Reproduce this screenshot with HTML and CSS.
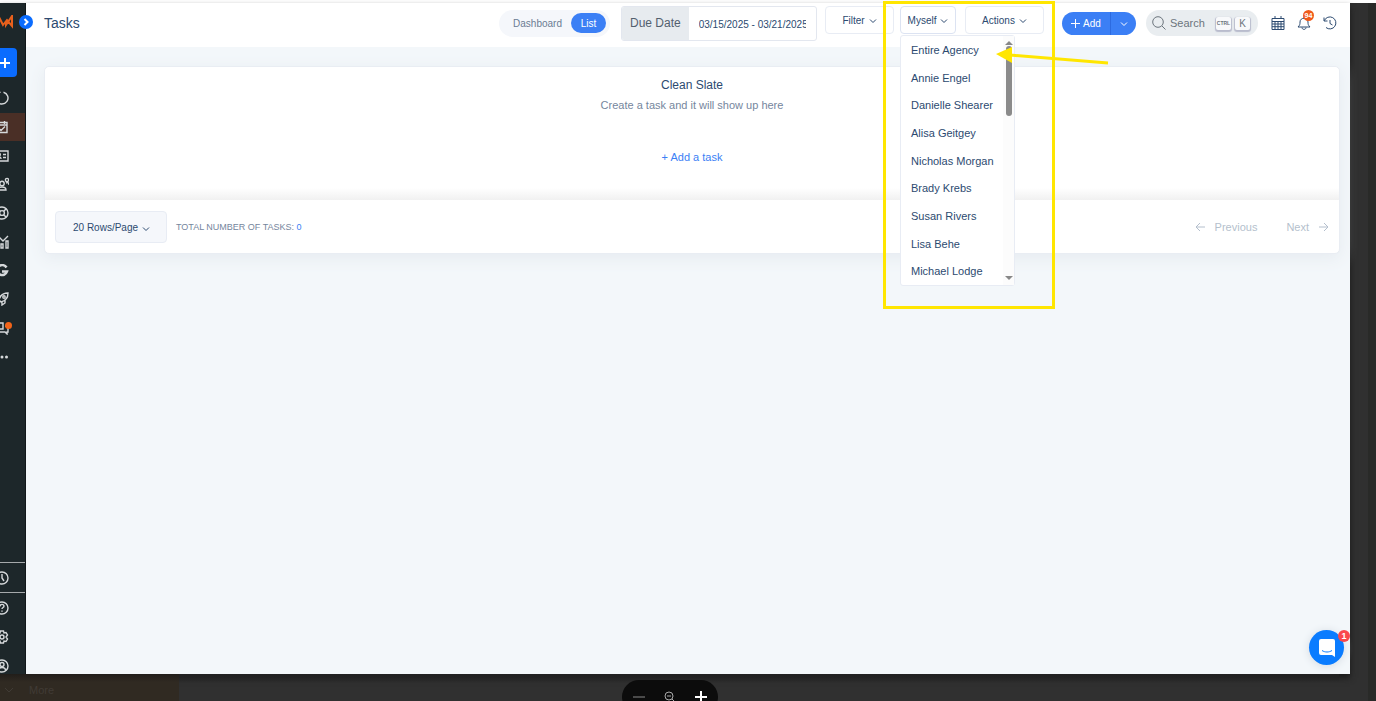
FILE: index.html
```html
<!DOCTYPE html>
<html lang="en">
<head>
    <meta charset="UTF-8">
    <meta name="viewport" content="width=device-width, initial-scale=1.0">
    <title>Tasks</title>
    <link rel="stylesheet" href="styles.css">
</head>
<body>
    <div class="app">
        <aside class="sidebar">
            <a class="logo" href="#" aria-label="Home">
                <svg width="22" height="14" viewBox="0 0 22 14"><path d="M0 4l4 6 4-6 3 6 4-5 5 6V1l-6 9V6"/></svg>
            </a>
            <button class="new-btn" aria-label="New"><svg width="12" height="12" viewBox="0 0 12 12"><path d="M6 1v10M1 6h10"/></svg></button>
            <nav class="side-nav">
                <a href="#" aria-label="Overview"><svg viewBox="0 0 14 14"><path d="M8.500 1.200A6 6 0 1 1 5.500 1.200"/></svg></a>
                <a href="#" class="active" aria-label="Tasks"><svg viewBox="0 0 14 14"><path d="M1 2.500h11v10H1zM1 5h11M4 1v3M9.500 1v3M4 8.500l2 2 4-4"/></svg></a>
                <a href="#" aria-label="Contacts"><svg viewBox="0 0 14 14"><path d="M0 2h13v10H0zM8 5.500h3M8 8.500h3M2 10c0-3 4-3 4 0"/><circle cx="4" cy="5.500" r="1.300"/></svg></a>
                <a href="#" aria-label="Teams"><svg viewBox="0 0 14 14"><circle cx="7" cy="6.500" r="2.200"/><circle cx="2" cy="3" r="1.600"/><circle cx="12" cy="3" r="1.600"/><path d="M3 13c0-4 8-4 8 0zM11 6c2-1 3 0 3 2M3 6C1 5 0 6 0 8"/></svg></a>
                <a href="#" aria-label="Support"><svg viewBox="0 0 14 14"><circle cx="7" cy="7" r="6"/><circle cx="7" cy="7" r="2.400"/><path d="M2.800 2.800l2.500 2.500M11.200 2.800L8.700 5.300M2.800 11.200l2.500-2.500M11.200 11.200L8.700 8.700"/></svg></a>
                <a href="#" aria-label="Reports"><svg viewBox="0 0 14 14"><path d="M1 13V8h2v5zM6 13V9h2v4zM11 13V6h2v7zM0 5l4-3 4 4 5-5"/></svg></a>
                <a href="#" aria-label="Google"><svg class="bold" viewBox="0 0 14 14"><path d="M11.500 3.500A5 5 0 1 0 12 7.500H7"/></svg></a>
                <a href="#" aria-label="Launch"><svg viewBox="0 0 14 14"><path d="M4 8c1-4 4-7 9-7 0 5-3 8-7 9zM4 7H1l2-3h3M7 10v3l3-2V8M3 10l-2 3 3-1"/><circle cx="9" cy="5" r="1.200"/></svg></a>
                <a href="#" class="has-dot" aria-label="Messages"><svg viewBox="0 0 14 14"><path d="M0 2h8v6H4l-2 2V8H0zM10 5h3v6h-1v2l-2-2H5"/></svg></a>
                <a href="#" aria-label="More"><svg class="dots" viewBox="0 0 14 14"><circle cx="2" cy="7" r="1.500"/><circle cx="7" cy="7" r="1.500"/><circle cx="11.500" cy="7" r="1.500"/></svg></a>
            </nav>
            <nav class="side-bottom">
                <a href="#" class="clock" aria-label="Time"><svg viewBox="0 0 14 14"><circle cx="7" cy="7" r="6"/><path d="M7 3v4l2 3"/></svg></a>
                <a href="#" aria-label="Help"><svg viewBox="0 0 14 14"><circle cx="7" cy="7" r="6"/><path d="M5 5.500c0-3 4-2.500 4-.300C9 6.500 7 6.500 7 8M7 9.500v1.200"/></svg></a>
                <a href="#" aria-label="Settings"><svg viewBox="0 0 14 14"><path d="M5.500 1h3l.5 2 2-.500 1.500 2.500L11 7l1.500 2-1.500 2.500-2-.500-.5 2h-3L5 11l-2 .500L1.500 9 3 7 1.500 5 3 2.500 5 3z"/><circle cx="7" cy="7" r="2"/></svg></a>
                <a href="#" aria-label="Account"><svg viewBox="0 0 14 14"><circle cx="7" cy="7" r="6"/><circle cx="7" cy="5.500" r="2"/><path d="M3.500 11.500c0-4 7-4 7 0"/></svg></a>
            </nav>
        </aside>

        <div class="main">
            <button class="expand-btn" aria-label="Expand menu"><svg width="8" height="8" viewBox="0 0 8 8"><path d="M2.500 1l3 3-3 3"/></svg></button>
            <header class="topbar">
                <h1>Tasks</h1>
                <div class="view-toggle">
                    <button>Dashboard</button>
                    <button class="on">List</button>
                </div>
                <div class="date-group">
                    <label for="dueDate">Due Date</label>
                    <input type="text" id="dueDate" value="03/15/2025 - 03/21/2025">
                </div>
                <div class="filters">
                    <button class="drop filter">Filter <svg class="chev" viewBox="0 0 8 6"><path d="M1 1.500l3 3 3-3"/></svg></button>
                    <div class="assignee">
                        <button class="drop myself" aria-expanded="true">Myself <svg class="chev" viewBox="0 0 8 6"><path d="M1 1.500l3 3 3-3"/></svg></button>
                        <div class="menu">
                            <ul>
                                <li><button>Entire Agency</button></li>
                                <li><button>Annie Engel</button></li>
                                <li><button>Danielle Shearer</button></li>
                                <li><button>Alisa Geitgey</button></li>
                                <li><button>Nicholas Morgan</button></li>
                                <li><button>Brady Krebs</button></li>
                                <li><button>Susan Rivers</button></li>
                                <li><button>Lisa Behe</button></li>
                                <li><button>Michael Lodge</button></li>
                            </ul>
                            <div class="scroll">
                                <svg width="8" height="5" viewBox="0 0 8 5"><path d="M0 5l4-4 4 4z"/></svg>
                                <div class="thumb"></div>
                                <svg width="8" height="5" viewBox="0 0 8 5"><path d="M0 0l4 4 4-4z"/></svg>
                            </div>
                        </div>
                        <div class="highlight"></div>
                        <svg class="arrow" width="114" height="20" viewBox="0 0 114 20"><path class="line" d="M14 7l98 8"/><path d="M0 6L16-1v16z"/></svg>
                    </div>
                    <button class="drop actions">Actions <svg class="chev" viewBox="0 0 8 6"><path d="M1 1.500l3 3 3-3"/></svg></button>
                </div>
                <div class="add-group">
                    <button class="add"><svg width="9" height="9" viewBox="0 0 9 9"><path d="M4.500 0v9M0 4.500h9"/></svg>Add</button>
                    <button class="add-more" aria-label="More add options"><svg class="chev" viewBox="0 0 8 6"><path d="M1 1.500l3 3 3-3"/></svg></button>
                </div>
                <button class="search">
                    <svg width="14" height="14" viewBox="0 0 14 14"><circle cx="6" cy="6" r="5.300"/><path d="M10 10l3.500 3.500"/></svg>
                    Search
                    <span class="keys"><kbd class="ctrl">CTRL</kbd><kbd>K</kbd></span>
                </button>
                <div class="tools">
                    <button aria-label="Calendar"><svg viewBox="0 0 14 14"><path d="M1 2.500h12v11H1zM1 5.500h12M1 8h12M1 10.700h12M4 5.500v8M7 5.500v8M10 5.500v8M4 0v3M10 0v3"/></svg></button>
                    <button aria-label="Notifications"><svg viewBox="0 0 14 14"><path d="M1 11c2-2 2-3 2-5 0-5 8-5 8 0 0 2 0 3 2 5zM5 11.500c0 2.500 4 2.500 4 0M7 2V.500"/></svg><span class="count">94</span></button>
                    <button aria-label="History"><svg viewBox="0 0 14 14"><path d="M1 1.500V5h3.500M1.300 4.700A6 6 0 1 1 3 11.500M7 4v3.500l2.500 1.500"/></svg></button>
                </div>
            </header>

            <main class="content">
                <section class="card">
                    <div class="empty">
                        <h2>Clean Slate</h2>
                        <p>Create a task and it will show up here</p>
                        <a href="#">+ Add a task</a>
                    </div>
                    <footer class="card-footer">
                        <div class="rows">
                            <select aria-label="Rows per page"><option>20 Rows/Page</option><option>50 Rows/Page</option></select>
                            <svg class="chev" viewBox="0 0 8 6"><path d="M1 1.500l3 3 3-3"/></svg>
                        </div>
                        <p class="total">TOTAL NUMBER OF TASKS: <span>0</span></p>
                        <div class="pager">
                            <button disabled><svg width="10" height="10" viewBox="0 0 10 10"><path d="M10 5H1M5 1L1 5l4 4"/></svg>Previous</button>
                            <button disabled>Next<svg width="10" height="10" viewBox="0 0 10 10"><path d="M0 5h9M5 1l4 4-4 4"/></svg></button>
                        </div>
                    </footer>
                </section>
            </main>

            <button class="chat" aria-label="Open chat">
                <svg width="16" height="18" viewBox="0 0 16 18"><path d="M2 0h12a2 2 0 0 1 2 2v16l-3-2H2a2 2 0 0 1-2-2V2a2 2 0 0 1 2-2z" fill="#fff"/><path d="M3 11.500c3 2 7 2 10 0" fill="none" stroke="#0a7cff"/></svg>
                <span class="chat-count">1</span>
            </button>
        </div>
    </div>

    <div class="viewer-bar">
        <div class="behind"><svg width="10" height="6" viewBox="0 0 10 6"><path d="M1 1l4 4 4-4"/></svg>More</div>
        <div class="zoom-pill">
            <button aria-label="Zoom out"><svg width="12" height="12" viewBox="0 0 12 12"><path d="M0 6h12" stroke="#888"/></svg></button>
            <button aria-label="Reset zoom"><svg width="12" height="12" viewBox="0 0 12 12"><g stroke="#aaa"><circle cx="5" cy="5" r="4"/><path d="M8 8l4 4M3 5h4"/></g></svg></button>
            <button aria-label="Zoom in"><svg width="12" height="12" viewBox="0 0 12 12"><path d="M6 0v12M0 6h12" stroke="#fff" stroke-width="2"/></svg></button>
        </div>
    </div>
</body>
</html>
```

FILE: styles.css
```css
* {
    box-sizing: border-box;
}
body {
    margin: 0;
    height: 100vh;
    overflow: hidden;
    display: flex;
    flex-direction: column;
    padding-top: 3px;
    background: linear-gradient(#fff 3px, transparent 3px), linear-gradient(to left, #292a28 8px, #303030 8px);
    font-family: "Liberation Sans", Arial, sans-serif;
    font-size: 11px;
    color: #2c4a70;
}
h1, h2, p, ul {
    margin: 0;
    padding: 0;
    font-weight: normal;
}
ul {
    list-style: none;
}
button, input, select {
    font: inherit;
    color: inherit;
    border: none;
    background: none;
    padding: 0;
    margin: 0;
}
button {
    cursor: pointer;
}
a {
    text-decoration: none;
}
svg {
    fill: none;
    stroke: currentColor;
    flex: none;
}
.app {
    flex: 1;
    min-height: 0;
    display: flex;
    margin-right: 26px;
    box-shadow: 0 4px 6px #1a1a1a;
}

/* Sidebar */
.sidebar {
    width: 26px;
    flex: none;
    overflow: hidden;
    display: flex;
    flex-direction: column;
    background: #1d272a;
    border-right: 1px solid #111719;
    color: #d5d8da;
}
.logo {
    height: 45px;
    margin-left: -8px;
    padding-top: 12px;
    color: #e8601c;
}
.logo svg {
    stroke-width: 2;
}
.new-btn {
    width: 26px;
    height: 29px;
    margin-left: -9px;
    margin-bottom: 7px;
    padding-left: 1px;
    flex: none;
    display: flex;
    align-items: center;
    justify-content: center;
    border-radius: 4px;
    background: #0a6cff;
    color: #fff;
    stroke-width: 2;
}
.side-nav {
    height: 287px;
    flex: none;
    display: flex;
    flex-direction: column;
}
.side-nav a, .side-bottom a {
    display: flex;
    align-items: center;
    color: inherit;
}
.side-nav a {
    flex: 1;
}
.sidebar nav svg {
    width: 14px;
    height: 14px;
    margin-left: -5px;
    stroke-width: 1.4;
}
.side-nav .active {
    background: #4a2f26;
}
.sidebar nav .bold {
    stroke-width: 2.5;
}
.side-nav .dots {
    fill: currentColor;
    stroke: none;
}
.has-dot {
    position: relative;
}
.has-dot::after {
    content: "";
    position: absolute;
    left: 5px;
    top: 8px;
    width: 7px;
    height: 7px;
    border-radius: 50%;
    background: #f26419;
}
.side-bottom {
    margin-top: auto;
    margin-bottom: -6px;
}
.side-bottom a {
    height: 29px;
}
.side-bottom .clock {
    height: 31px;
    border-top: 1px solid #a5a9ab;
    border-bottom: 1px solid #a5a9ab;
}

/* Top bar */
.main {
    flex: 1;
    min-width: 0;
    position: relative;
    background: #f3f7fa;
}
.expand-btn {
    position: absolute;
    left: -7px;
    top: 12px;
    width: 14px;
    height: 14px;
    display: flex;
    align-items: center;
    justify-content: center;
    border-radius: 50%;
    background: #0a6cff;
    color: #fff;
    stroke-width: 2;
}
.topbar {
    height: 44px;
    display: flex;
    align-items: center;
    padding: 0 13px 4px 18px;
    background: #fff;
}
.topbar h1 {
    font-size: 14px;
    margin-right: auto;
}
.view-toggle {
    display: flex;
    align-items: center;
    height: 27px;
    margin-right: 11px;
    padding: 0 4px 0 14px;
    gap: 9px;
    border-radius: 14px;
    background: #f5f7fb;
    font-size: 10px;
    color: #6b7c93;
}
.view-toggle .on {
    width: 35px;
    height: 20px;
    border-radius: 10px;
    background: #3b7ff5;
    color: #fff;
}
.date-group {
    width: 196px;
    height: 35px;
    margin-right: 8px;
    display: flex;
    overflow: hidden;
    border: 1px solid #e3e7ef;
    border-radius: 3px;
    background: #fff;
}
.date-group label {
    display: flex;
    align-items: center;
    padding: 0 8px;
    background: #e7ebef;
    color: #53606e;
    font-size: 12px;
}
.date-group input {
    flex: 1;
    min-width: 0;
    margin: 2px 10px 0;
    font-size: 10px;
    outline: none;
}
.filters {
    display: flex;
    align-self: flex-start;
    margin-top: 3px;
    font-size: 10px;
}
.drop {
    display: flex;
    align-items: center;
    justify-content: center;
    gap: 4px;
    height: 28px;
    border: 1px solid #e8ecf4;
    border-radius: 4px;
    background: #fff;
}
.chev {
    width: 8px;
    height: 6px;
    margin-top: 1px;
}
.filter {
    width: 69px;
    margin-right: 6px;
}
.myself {
    width: 56px;
    border-color: #dce3f2;
}
.actions {
    width: 79px;
    margin-left: 9px;
}
.assignee {
    position: relative;
    z-index: 2;
}
.menu {
    position: absolute;
    left: 0;
    top: 29px;
    width: 115px;
    height: 251px;
    display: flex;
    border: 1px solid #e8ecf4;
    border-radius: 3px;
    background: #fff;
    font-size: 11px;
}
.menu ul {
    flex: 1;
    display: flex;
    flex-direction: column;
}
.menu li {
    flex: 1;
    display: flex;
}
.menu li button {
    flex: 1;
    padding-left: 10px;
    text-align: left;
    white-space: nowrap;
}
.scroll {
    width: 11px;
    display: flex;
    flex-direction: column;
    align-items: center;
    padding: 4px 0;
    background: #fcfcfc;
}
.scroll svg {
    fill: #888;
    stroke: none;
}
.thumb {
    width: 6px;
    height: 70px;
    margin: 1px 0 auto;
    border-radius: 3px;
    background: #8b8b8b;
}
.highlight {
    position: absolute;
    left: -17px;
    top: -5px;
    width: 172px;
    height: 308px;
    border: 3px solid #ffe600;
    pointer-events: none;
}
.arrow {
    position: absolute;
    left: 96px;
    top: 42px;
    overflow: visible;
    fill: #ffe600;
    stroke: none;
    pointer-events: none;
}
.arrow .line {
    stroke: #ffe600;
    stroke-width: 3;
}
.add-group {
    display: flex;
    height: 23px;
    margin: 0 10px 0 18px;
    overflow: hidden;
    border-radius: 12px;
    background: #3b7ff5;
    color: #fff;
    font-size: 10px;
}
.add {
    width: 48px;
    display: flex;
    align-items: center;
    justify-content: center;
    gap: 3px;
}
.add-more {
    width: 26px;
    border-left: 1px solid #2d6be0;
}
.search {
    width: 112px;
    height: 26px;
    display: flex;
    align-items: center;
    gap: 4px;
    padding: 0 8px 0 6px;
    border-radius: 13px;
    background: #e9edf0;
    color: #6c757d;
}
.keys {
    display: flex;
    gap: 4px;
    margin-left: auto;
}
.keys kbd {
    width: 15px;
    height: 13px;
    border-radius: 2px;
    background: #f8f9fb;
    box-shadow: 0 1px 1px 1px #b9bccd;
    font: 10px/13px "Liberation Sans", Arial, sans-serif;
    text-align: center;
}
.keys .ctrl {
    font-size: 5px;
    font-weight: bold;
}
.tools {
    display: flex;
    gap: 12px;
    margin-left: 13px;
}
.tools button {
    position: relative;
    width: 14px;
    height: 14px;
}
.tools svg {
    display: block;
    width: 14px;
    height: 14px;
}
.count {
    position: absolute;
    left: 6px;
    top: -6px;
    width: 11px;
    height: 11px;
    border-radius: 50%;
    background: #f05a1a;
    color: #fff;
    font-size: 7px;
    line-height: 11px;
    font-weight: bold;
}

/* Task card */
.content {
    padding: 19px 10px 0 18px;
}
.card {
    border: 1px solid #e9edf3;
    border-radius: 5px;
    background: #fff;
    box-shadow: 0 4px 16px #e6ebf0;
}
.empty {
    height: 133px;
    padding-top: 10px;
    text-align: center;
    border-radius: 5px 5px 0 0;
    background: linear-gradient(to top, #f1f1f1, #fff 12px);
}
.empty h2 {
    font-size: 12px;
    line-height: 16px;
}
.empty p {
    margin: 4px 0 36px;
    line-height: 16px;
    color: #75869d;
}
.empty a {
    line-height: 16px;
    color: #3b7ff5;
}
.card-footer {
    display: flex;
    align-items: center;
    padding: 11px 10px 10px;
    gap: 9px;
}
.rows {
    position: relative;
}
.rows select {
    width: 112px;
    height: 32px;
    padding-left: 17px;
    appearance: none;
    border: 1px solid #e8ecf4;
    border-radius: 4px;
    background: #f5f7fb;
    font-size: 10px;
}
.rows .chev {
    position: absolute;
    right: 17px;
    top: 14px;
    pointer-events: none;
}
.total {
    font-size: 9px;
    color: #75869d;
}
.total span {
    color: #3b7ff5;
}
.pager {
    display: flex;
    gap: 29px;
    margin-left: auto;
    color: #b4bfcd;
}
.pager button {
    display: flex;
    align-items: center;
    gap: 10px;
}

/* Chat launcher */
.chat {
    position: absolute;
    right: 6px;
    bottom: 9px;
    width: 35px;
    height: 35px;
    display: flex;
    align-items: center;
    justify-content: center;
    border-radius: 50%;
    background: #0a7cff;
    box-shadow: 0 1px 8px #d3dae2;
}
.chat svg {
    stroke: none;
}
.chat-count {
    position: absolute;
    right: -6px;
    top: 0;
    width: 12px;
    height: 12px;
    border-radius: 50%;
    background: #f9484c;
    color: #fff;
    font-size: 9px;
    line-height: 12px;
    font-weight: bold;
}

/* Viewer strip under the app */
.viewer-bar {
    height: 27px;
    flex: none;
    display: grid;
    grid-template-columns: 1fr auto 1fr;
    margin-right: 37px;
    background: linear-gradient(#222, transparent 8px);
}
.behind {
    width: 179px;
    height: 27px;
    display: flex;
    align-items: center;
    gap: 15px;
    padding: 5px 0 0 4px;
    background: linear-gradient(#211e1a, #302a22 8px);
    color: #403b35;
}
.zoom-pill {
    display: flex;
    align-items: flex-start;
    gap: 19px;
    height: 34px;
    margin-top: 6px;
    padding: 11px 11px 0;
    border-radius: 17px;
    background: #0c0c0c;
}
.zoom-pill button {
    height: 12px;
}
.zoom-pill svg {
    display: block;
}
```
